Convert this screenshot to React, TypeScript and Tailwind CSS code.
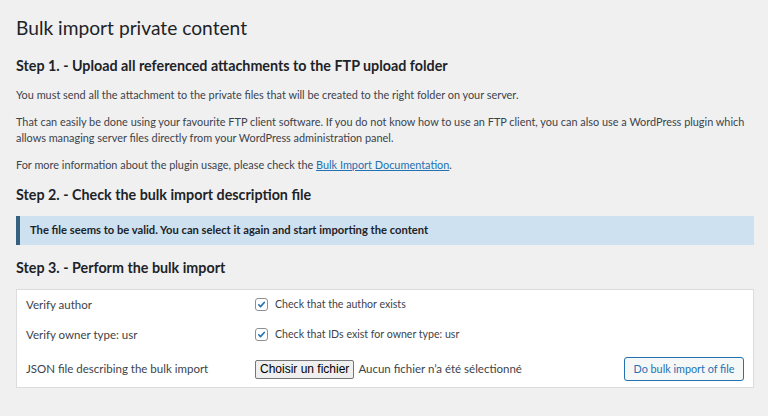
import React from "react";

const font = { fontFamily: 'Lato, "Open Sans", sans-serif' };

function CheckBox() {
  return (
    <span className="flex h-[13px] w-[13px] shrink-0 items-center justify-center rounded-[3px] border border-[#8c8f94] bg-white">
      <svg viewBox="0 0 20 20" className="h-[13px] w-[13px]">
        <path d="M5 10.5l3.2 3.4L15 6.2" fill="none" stroke="#2271b1" strokeWidth="2.9" strokeLinecap="round" strokeLinejoin="round" />
      </svg>
    </span>
  );
}

function Row({ label, children, tall }: { label: string; children: React.ReactNode; tall?: boolean }) {
  return (
    <div className={`flex items-center ${tall ? "h-[24px]" : "h-[22px]"}`}>
      <div className="w-[238px] shrink-0 pl-[9px] text-[11.5px] text-[#3c434a]">{label}</div>
      <div className="flex flex-1 items-center">{children}</div>
    </div>
  );
}

export default function App() {
  return (
    <div className="min-h-[416px] bg-[#f0f0f1] pl-4 pr-[14px] pt-[15px] text-[10.9px] text-[#3c434a]" style={font}>
      <h1 className="text-[19.2px] leading-[26px] text-[#1d2327]">Bulk import private content</h1>

      <h2 className="mt-[15px] text-[14.3px] font-bold leading-[20px] text-[#1d2327]">
        Step 1. - Upload all referenced attachments to the FTP upload folder
      </h2>
      <p className="mt-[11px] leading-[16px]">
        You must send all the attachment to the private files that will be created to the right folder on your server.
      </p>
      <p className="mt-[11px] leading-[16px]">
        That can easily be done using your favourite FTP client software. If you do not know how to use an FTP client, you can also use a WordPress plugin which allows managing server files directly from your WordPress administration panel.
      </p>
      <p className="mt-[11px] leading-[16px]">
        For more information about the plugin usage, please check the{" "}
        <a href="#" className="text-[#2271b1] underline">Bulk Import Documentation</a>.
      </p>

      <h2 className="mt-[12px] text-[14.3px] font-bold leading-[20px] text-[#1d2327]">
        Step 2. - Check the bulk import description file
      </h2>
      <div className="mt-[11px] flex h-[29px] items-center border-l-4 border-[#35617f] bg-[#cee1f1] pl-[10px] text-[11.2px] font-bold text-[#1d2327]">
        The file seems to be valid. You can select it again and start importing the content
      </div>

      <h2 className="mt-[13px] text-[14.3px] font-bold leading-[20px] text-[#1d2327]">
        Step 3. - Perform the bulk import
      </h2>
      <div className="mt-[11px] border border-[#dcdcde] bg-white pb-[6px] pr-[9px] pt-[4px]">
        <Row label="Verify author">
          <CheckBox />
          <span className="ml-[7px] text-[10.6px]">Check that the author exists</span>
        </Row>
        <div className="mt-[8px]">
          <Row label="Verify owner type: usr">
            <CheckBox />
            <span className="ml-[7px] text-[10.6px]">Check that IDs exist for owner type: usr</span>
          </Row>
        </div>
        <div className="mt-[11px]">
          <Row label="JSON file describing the bulk import" tall>
            <span
              className="flex h-[19px] items-center rounded-[2px] border border-[#767676] bg-[#efefef] px-[4px] text-[12px] text-black"
              style={{ fontFamily: '"Liberation Sans", Arial, sans-serif' }}
            >
              Choisir un fichier
            </span>
            <span className="ml-[4px] text-[11.5px]">Aucun fichier n’a été sélectionné</span>
            <button
              type="button"
              className="ml-auto flex h-[24px] w-[120px] items-center justify-center rounded-[3px] border border-[#2271b1] bg-[#f6f7f7] text-[10.8px] text-[#2271b1]"
            >
              Do bulk import of file
            </button>
          </Row>
        </div>
      </div>
    </div>
  );
}
